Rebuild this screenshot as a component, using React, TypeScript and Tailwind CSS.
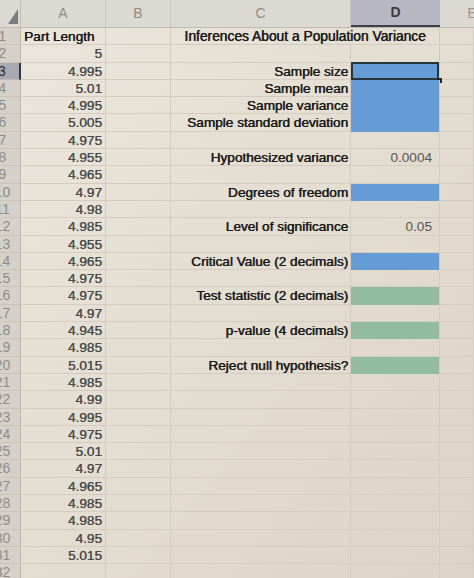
import React from "react";

const partLengths = [
  "5", "4.995", "5.01", "4.995", "5.005", "4.975", "4.955", "4.965", "4.97", "4.98",
  "4.985", "4.955", "4.965", "4.975", "4.975", "4.97", "4.945", "4.985", "5.015", "4.985",
  "4.99", "4.995", "4.975", "5.01", "4.97", "4.965", "4.985", "4.985", "4.95", "5.015",
];

type Fill = "blue" | "green" | null;

const rightSide: Record<number, { label: string; value?: string; fill?: Fill }> = {
  3: { label: "Sample size", fill: "blue" },
  4: { label: "Sample mean", fill: "blue" },
  5: { label: "Sample variance", fill: "blue" },
  6: { label: "Sample standard deviation", fill: "blue" },
  8: { label: "Hypothesized variance", value: "0.0004" },
  10: { label: "Degrees of freedom", fill: "blue" },
  12: { label: "Level of significance", value: "0.05" },
  14: { label: "Critical Value (2 decimals)", fill: "blue" },
  16: { label: "Test statistic (2 decimals)", fill: "green" },
  18: { label: "p-value (4 decimals)", fill: "green" },
  20: { label: "Reject null hypothesis?", fill: "green" },
};

const grid = "border-b border-r border-[#d4ccbf]";

function HeaderRow() {
  return (
    <div className="flex h-[28px] bg-[#dcd9d2] border-b border-[#bfbab0] text-[14px] text-[#8d8b88]">
      <div className="w-[36px] shrink-0 flex items-end justify-end pr-[2px] pb-[3px] border-r border-[#c2bdb4]">
        <svg width="10" height="15" viewBox="0 0 10 15">
          <polygon points="10,0 10,15 0,15" fill="#7d7c7e" />
        </svg>
      </div>
      <div className="w-[85px] shrink-0 flex items-center justify-center border-r border-[#cbc6bd]">A</div>
      <div className="w-[65px] shrink-0 flex items-center justify-center border-r border-[#cbc6bd]">B</div>
      <div className="w-[180px] shrink-0 flex items-center justify-center border-r border-[#cbc6bd]">C</div>
      <div className="w-[89px] shrink-0 flex items-center justify-center bg-[#b6b7c1] border-b-2 border-[#3c3f45] font-bold text-[#3b3c44]">
        D
      </div>
      <div className="w-[64px] shrink-0 flex items-center justify-center text-[#9a9892]">E</div>
    </div>
  );
}

function Row({ n }: { n: number }) {
  const a = n === 1 ? "Part Length" : partLengths[n - 2];
  const right = rightSide[n];
  const selectedRow = n === 3;
  const fill =
    right?.fill === "blue" ? "bg-[#659cd6]" : right?.fill === "green" ? "bg-[#92bb9f]" : "";

  return (
    <div className="flex h-[17.3px] leading-[17px]">
      <div
        className={
          selectedRow
            ? "w-[36px] shrink-0 text-center bg-[#a9aab1] text-[#2d2e33] border-r-2 border-[#34363b] border-b border-b-[#b9b7b2] text-[14px]"
            : "w-[36px] shrink-0 text-center bg-[#d5d1c9] text-[#8f8c87] border-r border-[#bcb6ab] border-b border-b-[#c9c4bb] text-[14px]"
        }
      >
        {n}
      </div>
      <div
        className={`w-[85px] shrink-0 pl-[3px] pr-[3px] ${grid} ${
          n === 1
            ? "text-left text-[#1a1a1a] [text-shadow:0.5px_0_0_currentColor]"
            : "text-right text-[#4b4b4b] [text-shadow:0.2px_0_0_currentColor]"
        }`}
      >
        {a}
      </div>
      <div className={`w-[65px] shrink-0 ${grid}`} />
      {n === 1 ? (
        <div className={`w-[269px] shrink-0 text-center whitespace-nowrap text-[13.8px] text-[#1a1a1a] [text-shadow:0.5px_0_0_currentColor] ${grid}`}>
          Inferences About a Population Variance
        </div>
      ) : (
        <>
          <div
            className={`w-[180px] shrink-0 pr-[2px] text-right whitespace-nowrap text-[#1a1a1a] [text-shadow:0.5px_0_0_currentColor] ${grid}`}
          >
            {right?.label ?? ""}
          </div>
          <div
            className={`relative w-[89px] shrink-0 pr-[7px] text-right text-[#555] ${
              fill ? `${fill} border-r border-[#d4ccbf]` : grid
            }`}
          >
            {right?.value ?? ""}
            {selectedRow && (
              <>
                <div className="absolute inset-[-1px_0_0_0] border-2 border-[#27343a]" />
                <div className="absolute right-[-3px] bottom-[-3px] w-[5px] h-[5px] bg-[#1f2a2e]" />
              </>
            )}
          </div>
        </>
      )}
      <div className={`flex-1 ${grid}`} />
    </div>
  );
}

export default function App() {
  const rows = Array.from({ length: 32 }, (_, i) => i + 1);
  return (
    <div className="w-[474px] h-[578px] overflow-hidden bg-gradient-to-br from-[#ebe6dc] via-[#e4ddd1] to-[#dcd4c6] font-['Liberation_Sans',Arial,sans-serif] text-[13.6px]">
      <div className="-ml-[15px] w-[489px]">
        <HeaderRow />
        {rows.map((n) => (
          <Row key={n} n={n} />
        ))}
      </div>
    </div>
  );
}
